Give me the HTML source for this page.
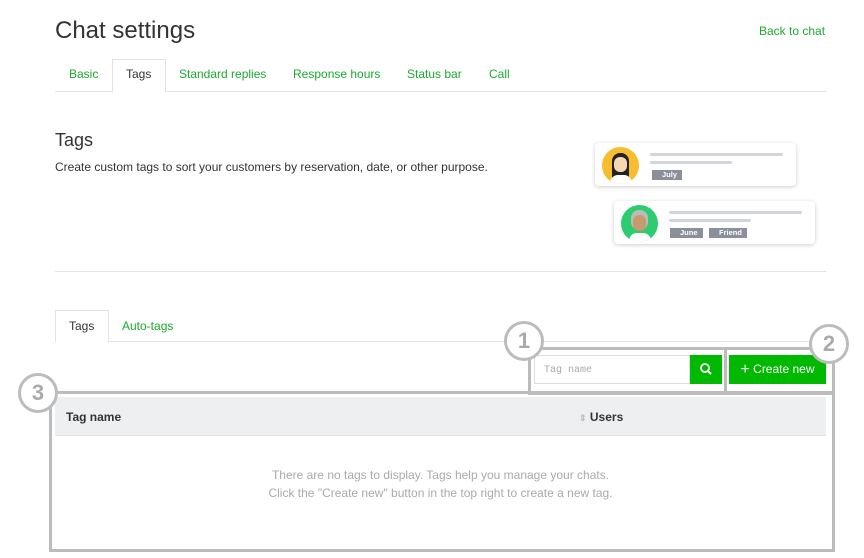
<!DOCTYPE html><html><head><style>
body{margin:0;width:864px;height:558px;background:#fff;font-family:"Liberation Sans",sans-serif;position:relative;overflow:hidden;color:#333}
.a{position:absolute}
.g{color:#1aab2e}
.tab{position:absolute;font-size:12px}
.card{position:absolute;background:#fff;border-radius:4px;box-shadow:0 1px 4px rgba(0,0,0,.2)}
.ln{position:absolute;height:3px;background:#d3d5dc;border-radius:2px}
.tg{position:absolute;height:10px;background:#8a8f99;color:#fff;font-size:7.5px;line-height:10px;padding:0 5px 0 10px;font-weight:bold}
.c{position:absolute;width:34px;height:34px;border:3px solid #bcbcbc;border-radius:50%;background:#fff;color:#aaa;font-size:22px;text-align:center;line-height:34px;font-weight:bold}
.bx{position:absolute;border:3px solid #bcbcbc}
</style></head><body>
<div class="a" style="left:55px;top:17px;font-size:24px;color:#333">Chat settings</div>
<div class="a g" style="left:759px;top:24px;font-size:12px">Back to chat</div>
<div class="a" style="left:55px;top:91px;width:771px;height:1px;background:#e3e3e3"></div>
<div class="a" style="left:112px;top:59px;width:52px;height:32px;border:1px solid #e3e3e3;border-bottom:1px solid #fff;background:#fff"></div>
<div class="tab g" style="left:69px;top:67px">Basic</div>
<div class="tab" style="left:126px;top:67px;color:#333">Tags</div>
<div class="tab g" style="left:179px;top:67px">Standard replies</div>
<div class="tab g" style="left:293px;top:67px">Response hours</div>
<div class="tab g" style="left:407px;top:67px">Status bar</div>
<div class="tab g" style="left:489px;top:67px">Call</div>
<div class="a" style="left:55px;top:130px;font-size:18px">Tags</div>
<div class="a" style="left:55px;top:160px;font-size:12px">Create custom tags to sort your customers by reservation, date, or other purpose.</div>
<div class="card" style="left:595px;top:143px;width:201px;height:43px">
 <div class="a" style="left:7px;top:4px;width:37px;height:37px;border-radius:50%;background:#f6bd2f;overflow:hidden"><div class="a" style="left:10px;top:6px;width:17px;height:26px;background:#222;border-radius:8px 8px 2px 2px"></div><div class="a" style="left:12px;top:10px;width:13px;height:15px;background:#f5d7b8;border-radius:6px"></div><div class="a" style="left:8px;top:28px;width:22px;height:12px;background:#fff;border-radius:8px 8px 0 0"></div></div>
 <div class="ln" style="left:55px;top:10px;width:133px"></div><div class="ln" style="left:55px;top:18px;width:82px"></div>
 <div class="tg" style="left:57px;top:27px">July</div></div>
<div class="card" style="left:614px;top:201px;width:201px;height:43px">
 <div class="a" style="left:7px;top:4px;width:37px;height:37px;border-radius:50%;background:#2ecc71;overflow:hidden"><div class="a" style="left:10px;top:5px;width:17px;height:20px;background:#bbb;border-radius:8px"></div><div class="a" style="left:12px;top:10px;width:13px;height:16px;background:#c99a6b;border-radius:6px"></div><div class="a" style="left:8px;top:28px;width:22px;height:12px;background:#fff;border-radius:8px 8px 0 0"></div></div>
 <div class="ln" style="left:55px;top:10px;width:133px"></div><div class="ln" style="left:55px;top:18px;width:82px"></div>
 <div class="tg" style="left:56px;top:27px">June</div><div class="tg" style="left:95px;top:27px">Friend</div></div>
<div class="a" style="left:55px;top:271px;width:771px;height:1px;background:#e3e3e3"></div>
<div class="a" style="left:55px;top:341px;width:771px;height:1px;background:#e3e3e3"></div>
<div class="a" style="left:55px;top:310px;width:52px;height:31px;border:1px solid #e3e3e3;border-bottom:1px solid #fff;background:#fff"></div>
<div class="tab" style="left:69px;top:319px">Tags</div>
<div class="tab g" style="left:122px;top:319px">Auto-tags</div>
<div class="bx" style="left:528px;top:347px;width:193px;height:42px"></div>
<div class="bx" style="left:724px;top:347px;width:105px;height:42px"></div>
<div class="bx" style="left:49px;top:391px;width:780px;height:155px"></div>
<div class="a" style="left:534px;top:355px;width:156px;height:29px;border:1px solid #ddd;box-sizing:border-box;font-family:'Liberation Mono',monospace;font-size:10px;color:#aaa;padding:9px 9px;background:#fff">Tag name</div>
<div class="a" style="left:690px;top:355px;width:32px;height:29px;background:#00b900"><svg width="32" height="29"><circle cx="15" cy="13" r="4" stroke="#fff" stroke-width="1.8" fill="none"/><path d="M18 16l3 3" stroke="#fff" stroke-width="2"/></svg></div>
<div class="a" style="left:729px;top:355px;width:97px;height:29px;background:#00b900;color:#fff;font-size:12px;line-height:29px;text-align:center"><span style="font-size:16px;vertical-align:-1px">+</span> Create new</div>
<div class="a" style="left:55px;top:397px;width:771px;height:38px;background:#eeeff1;border-bottom:1px solid #e3e3e3"></div>
<div class="a" style="left:66px;top:410px;font-size:12px;font-weight:bold">Tag name</div>
<div class="a" style="left:579px;top:410px;font-size:12px;font-weight:bold"><span style="color:#bbb;font-size:9px">⇕</span> Users</div>
<div class="a" style="left:55px;top:466px;width:771px;text-align:center;font-size:12px;color:#aaa;line-height:18px">There are no tags to display. Tags help you manage your chats.<br>Click the "Create new" button in the top right to create a new tag.</div>
<div class="c" style="left:504px;top:321px">1</div>
<div class="c" style="left:809px;top:324px">2</div>
<div class="c" style="left:18px;top:373px">3</div>
</body></html>
